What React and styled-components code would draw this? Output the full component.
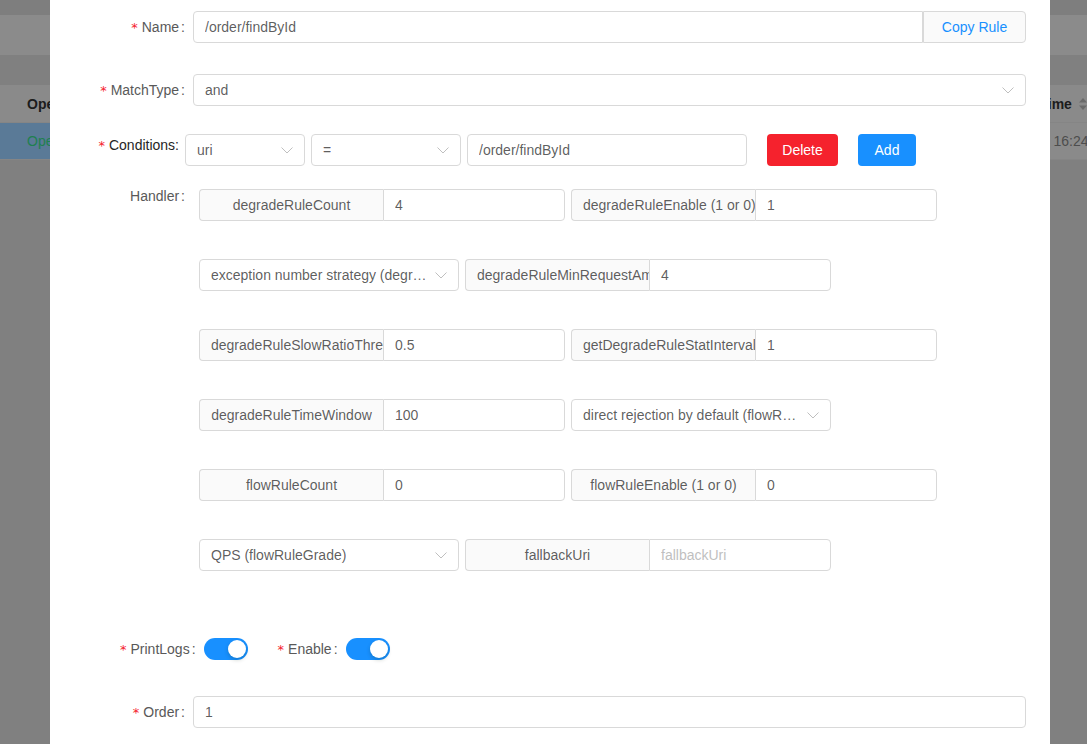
import React from "react";
import styled, { createGlobalStyle } from "styled-components";

const GlobalStyle = createGlobalStyle`
	html, body {
		margin: 0;
		height: 100%;
		overflow: hidden;
	}
	body {
		font-family: "Segoe UI", "Liberation Sans", Arial, sans-serif;
		font-size: 14px;
		background: #808080;
	}
	* {
		box-sizing: border-box;
	}
`;

// ---- page behind the modal (already dimmed by the mask) ----

const Backdrop = styled.div`
	width: 1095px;
	height: 744px;
	background: #808080;
`;

const Band = styled.div`
	height: ${(p) => p.$h}px;
	background: ${(p) => p.$bg || "#808080"};
`;

const TableRow = styled.div`
	display: grid;
	grid-template-columns: 1fr 122px;
	height: ${(p) => p.$h}px;
	border-bottom: 1px solid #858585;
`;

const Cell = styled.div`
	display: flex;
	align-items: center;
	gap: 6px;
	padding-left: ${(p) => p.$pad || 0}px;
	background: ${(p) => p.$bg || "#8a8a8a"};
	color: ${(p) => p.$color || "#4a4a4a"};
	font-weight: ${(p) => (p.$head ? 600 : 400)};
	white-space: nowrap;
	overflow: hidden;
`;

const SortIcon = () => (
	<svg width="10" height="14" viewBox="0 0 10 14">
		<path d="M5 1L9 5.5H1z" fill="#6a6a6a" />
		<path d="M5 13L9 8.5H1z" fill="#6a6a6a" />
	</svg>
);

// ---- modal ----

const Modal = styled.div`
	position: fixed;
	top: 0;
	bottom: 0;
	left: 50px;
	width: 1000px;
	background: #fff;
	padding: 11px 24px 0;
	color: rgba(0, 0, 0, 0.65);
`;

const FormItem = styled.div`
	display: grid;
	grid-template-columns: ${(p) => p.$label || 119}px 1fr;
	align-items: start;
	margin-bottom: ${(p) => p.$mb || 0}px;
`;

const LabelCell = styled.div`
	height: 32px;
	text-align: right;
	line-height: ${(p) => p.$lh || 32}px;
	white-space: nowrap;
	color: ${(p) => (p.$dark ? "#262626" : "#595959")};
	padding-right: ${(p) => p.$pr || 0}px;
`;

const Req = styled.span`
	color: #f5222d;
	margin-right: 4px;
	font-family: "DejaVu Sans", sans-serif;
	font-size: 13px;
	line-height: 1;
`;

const Colon = styled.span`
	margin: ${(p) => (p.$tight ? "0" : "0 8px 0 2px")};
`;

const Label = ({ required, children, dark, tight, pr, lh }) => (
	<LabelCell $dark={dark} $pr={pr} $lh={lh}>
		{required && <Req>*</Req>}
		{children}
		<Colon $tight={tight}>:</Colon>
	</LabelCell>
);

const Control = styled.div`
	display: flex;
	align-items: center;
	gap: ${(p) => p.$gap || 0}px;
`;

const Input = styled.input`
	display: block;
	height: 32px;
	width: ${(p) => (p.$w ? `${p.$w}px` : "100%")};
	flex: ${(p) => (p.$w ? "none" : "1")};
	min-width: 0;
	padding: 4px 11px;
	border: 1px solid #d9d9d9;
	border-radius: ${(p) => (p.$joinLeft ? "0 4px 4px 0" : p.$joinRight ? "4px 0 0 4px" : "4px")};
	font: inherit;
	color: rgba(0, 0, 0, 0.65);
	background: #fff;
	outline: none;

	&::placeholder {
		color: #bfbfbf;
	}
`;

const Addon = styled.div`
	height: 32px;
	width: ${(p) => p.$w}px;
	flex: none;
	padding: 0 11px;
	line-height: 30px;
	text-align: center;
	white-space: nowrap;
	overflow: hidden;
	background: #fafafa;
	border: 1px solid #d9d9d9;
	border-${(p) => (p.$after ? "left" : "right")}: ${(p) => (p.$after ? "1px solid #d9d9d9" : "0")};
	border-radius: ${(p) => (p.$after ? "0 4px 4px 0" : "4px 0 0 4px")};
	color: ${(p) => (p.$link ? "#1890ff" : "rgba(0, 0, 0, 0.65)")};
`;

const Group = styled.div`
	display: flex;
	width: ${(p) => (p.$w ? `${p.$w}px` : "100%")};
`;

const SelectBox = styled.div`
	height: 32px;
	width: ${(p) => (p.$w ? `${p.$w}px` : "100%")};
	flex: none;
	display: flex;
	align-items: center;
	padding: 0 11px;
	border: 1px solid #d9d9d9;
	border-radius: 4px;
	background: #fff;
`;

const SelectValue = styled.span`
	flex: 1;
	min-width: 0;
	overflow: hidden;
	white-space: nowrap;
	text-overflow: ellipsis;
`;

const Chevron = () => (
	<svg width="12" height="12" viewBox="0 0 12 12" style={{ flex: "none", marginLeft: 4 }}>
		<path d="M0.5 3.5L6 9L11.5 3.5" fill="none" stroke="#bfbfbf" strokeWidth="1" />
	</svg>
);

const Select = ({ w, children }) => (
	<SelectBox $w={w}>
		<SelectValue>{children}</SelectValue>
		<Chevron />
	</SelectBox>
);

const Button = styled.button`
	height: 32px;
	width: ${(p) => p.$w}px;
	padding: 0;
	border: 0;
	border-radius: 4px;
	font: inherit;
	color: #fff;
	background: ${(p) => (p.$danger ? "#f5222d" : "#1890ff")};
	margin-left: ${(p) => p.$ml || 0}px;
`;

const HandlerLines = styled.div`
	display: flex;
	flex-direction: column;
	gap: 38px;
	padding-left: 6px;
`;

const Line = styled.div`
	display: flex;
	gap: 6px;
`;

const SwitchRow = styled.div`
	display: flex;
	align-items: center;
	gap: 30px;
	height: 32px;
	padding-left: 46px;
	margin-bottom: 31px;
`;

const InlineItem = styled.div`
	display: flex;
	align-items: center;
	color: #595959;
	white-space: nowrap;
`;

const Switch = styled.span`
	position: relative;
	display: inline-block;
	width: 44px;
	height: 22px;
	border-radius: 11px;
	background: #1890ff;

	&::after {
		content: "";
		position: absolute;
		top: 2px;
		left: 24px;
		width: 18px;
		height: 18px;
		border-radius: 50%;
		background: #fff;
		box-shadow: 0 2px 4px rgba(0, 35, 11, 0.2);
	}
`;

const Field = ({ label, value, placeholder }) => (
	<Group $w={366}>
		<Addon $w={184}>{label}</Addon>
		<Input $joinLeft readOnly value={value} placeholder={placeholder} />
	</Group>
);

export default function App() {
	return (
		<>
			<GlobalStyle />
			<Backdrop>
				<Band $h={15} $bg="#7e7e7e" />
				<Band $h={40} $bg="#8b8b8b" />
				<Band $h={30} $bg="#808080" />
				<TableRow $h={38}>
					<Cell $pad={27} $head $color="#1c1c1c">Operation</Cell>
					<Cell $pad={19} $head $color="#1c1c1c">
						UpdateTime <SortIcon />
					</Cell>
				</TableRow>
				<TableRow $h={37}>
					<Cell $pad={27} $bg="#5a7a97" $color="#1f8050">Open</Cell>
					<Cell $pad={5} $color="#4d4d4d">2021-09-16 16:24:07</Cell>
				</TableRow>
			</Backdrop>

			<Modal>
				<FormItem $mb={31}>
					<Label required>Name</Label>
					<Group>
						<Input $joinRight readOnly value="/order/findById" />
						<Addon $w={103} $after $link>Copy Rule</Addon>
					</Group>
				</FormItem>

				<FormItem $mb={28}>
					<Label required>MatchType</Label>
					<Select>and</Select>
				</FormItem>

				<FormItem $mb={23} $label={111}>
					<Label required dark tight pr={6} lh={22}>Conditions</Label>
					<Control $gap={6}>
						<Select w={120}>uri</Select>
						<Select w={150}>=</Select>
						<Input $w={280} readOnly value="/order/findById" />
						<Button $danger $w={71} $ml={14}>Delete</Button>
						<Button $w={58} $ml={14}>Add</Button>
					</Control>
				</FormItem>

				<FormItem $mb={62}>
					<Label lh={14}>Handler</Label>
					<HandlerLines>
						<Line>
							<Field label="degradeRuleCount" value="4" />
							<Field label="degradeRuleEnable (1 or 0)" value="1" />
						</Line>
						<Line>
							<Select w={260}>exception number strategy (degradeRuleGrade)</Select>
							<Field label="degradeRuleMinRequestAmount" value="4" />
						</Line>
						<Line>
							<Field label="degradeRuleSlowRatioThreshold" value="0.5" />
							<Field label="getDegradeRuleStatIntervals" value="1" />
						</Line>
						<Line>
							<Field label="degradeRuleTimeWindow" value="100" />
							<Select w={260}>direct rejection by default (flowRuleControlBehavior)</Select>
						</Line>
						<Line>
							<Field label="flowRuleCount" value="0" />
							<Field label="flowRuleEnable (1 or 0)" value="0" />
						</Line>
						<Line>
							<Select w={260}>QPS (flowRuleGrade)</Select>
							<Field label="fallbackUri" value="" placeholder="fallbackUri" />
						</Line>
					</HandlerLines>
				</FormItem>

				<SwitchRow>
					<InlineItem>
						<Req>*</Req>PrintLogs<Colon>:</Colon>
						<Switch />
					</InlineItem>
					<InlineItem>
						<Req>*</Req>Enable<Colon>:</Colon>
						<Switch />
					</InlineItem>
				</SwitchRow>

				<FormItem>
					<Label required>Order</Label>
					<Input readOnly value="1" />
				</FormItem>
			</Modal>
		</>
	);
}
